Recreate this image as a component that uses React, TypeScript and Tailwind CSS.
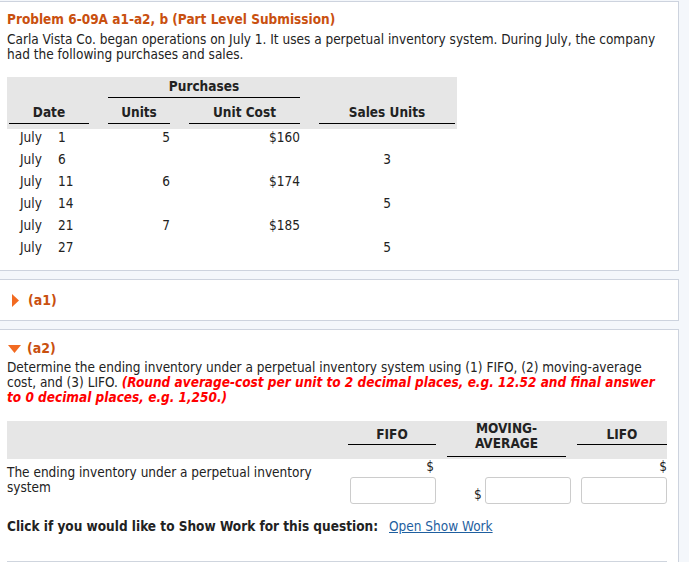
const rows = [
  { day: "1", units: "5", cost: "$160", sales: "" },
  { day: "6", units: "", cost: "", sales: "3" },
  { day: "11", units: "6", cost: "$174", sales: "" },
  { day: "14", units: "", cost: "", sales: "5" },
  { day: "21", units: "7", cost: "$185", sales: "" },
  { day: "27", units: "", cost: "", sales: "5" },
]

function Panel({ children, className = "" }: { children: React.ReactNode; className?: string }) {
  return (
    <div className={`bg-white border border-l-0 border-[#cdd3de] ${className}`}>{children}</div>
  )
}

function AnswerInput({ className = "" }: { className?: string }) {
  return (
    <input
      type="text"
      className={`h-[27px] w-[86px] rounded-[3px] border border-[#cccccc] bg-white px-1 outline-none ${className}`}
    />
  )
}

export default function App() {
  return (
    <div className="min-h-screen bg-[#f4f7fb] pr-[10px] pt-px text-[13.5px] leading-[15px] text-[#222] [font-family:'DejaVu_Sans_Condensed','Liberation_Sans',sans-serif]">
      <Panel className="px-[7px] pt-[10px] pb-[12px]">
        <h1 className="mb-[5px] font-bold text-[#c9500f]">
          Problem 6-09A a1-a2, b (Part Level Submission)
        </h1>
        <p>
          Carla Vista Co. began operations on July 1. It uses a perpetual inventory system. During July, the company
          had the following purchases and sales.
        </p>

        <div className="mt-[15px] w-[450px]">
          <div className="bg-[#e6e6e6] pt-[1px] pb-[5px] font-bold">
            <div className="flex gap-[15px]">
              <div className="w-[84px]" />
              <div className="w-[196px] px-[2px]">
                <div className="border-b border-black pb-[3px] pt-[1px] text-center">Purchases</div>
              </div>
            </div>
            <div className="mt-[7px] flex gap-[15px]">
              <div className="w-[84px] px-[2px]">
                <div className="border-b border-black pb-[3px] text-center">Date</div>
              </div>
              <div className="w-[66px] px-[2px]">
                <div className="border-b border-black pb-[3px] text-center">Units</div>
              </div>
              <div className="w-[115px] px-[2px]">
                <div className="border-b border-black pb-[3px] text-center">Unit Cost</div>
              </div>
              <div className="w-[140px] px-[2px]">
                <div className="border-b border-black pb-[3px] text-center">Sales Units</div>
              </div>
            </div>
          </div>
          <div className="-mt-[3px]">
            {rows.map((r) => (
              <div key={r.day} className="flex h-[22px] items-center gap-[15px]">
                <div className="flex w-[84px] pl-[13px]">
                  <span className="w-[38px]">July</span>
                  <span>{r.day}</span>
                </div>
                <div className="w-[66px] px-[2px] text-right">{r.units}</div>
                <div className="w-[115px] px-[2px] text-right">{r.cost}</div>
                <div className="w-[140px] px-[2px] text-center">{r.sales}</div>
              </div>
            ))}
          </div>
        </div>
      </Panel>

      <Panel className="mt-[8px] flex h-[42px] items-center gap-[9px] pl-[12px]">
        <svg width="7" height="13" viewBox="0 0 7 13" className="mt-px">
          <path d="M0 0 L7 6.5 L0 13 Z" fill="#f26a21" />
        </svg>
        <span className="text-[14px] font-bold text-[#c9500f]">(a1)</span>
      </Panel>

      <Panel className="mt-[8px] px-[7px] pt-[11px] pb-[2px]">
        <div className="flex items-center gap-[6px]">
          <svg width="13" height="8" viewBox="0 0 13 8" className="ml-px">
            <path d="M0 0 L13 0 L6.5 8 Z" fill="#f26a21" />
          </svg>
          <span className="text-[14px] font-bold text-[#c9500f]">(a2)</span>
        </div>
        <p className="mt-[4px]">
          Determine the ending inventory under a perpetual inventory system using (1) FIFO, (2) moving-average cost,
          and (3) LIFO.{" "}
          <span className="font-bold italic text-[#f00]">
            (Round average-cost per unit to 2 decimal places, e.g. 12.52 and final answer to 0 decimal places, e.g.
            1,250.)
          </span>
        </p>

        <div className="mt-[16px] w-[660px]">
          <div className="flex h-[38px] items-start bg-[#e6e6e6] font-bold">
            <div className="w-[341px]" />
            <div className="mt-[6px] w-[88px] border-b border-black pb-[2px] text-center">FIFO</div>
            <div className="ml-[11px] w-[119px] border-b border-black pb-[5px] text-center leading-[15px]">
              MOVING-
              <br />
              AVERAGE
            </div>
            <div className="ml-[11px] mt-[6px] w-[90px] border-b border-black pb-[2px] text-center">LIFO</div>
          </div>

          <div className="flex">
            <div className="w-[341px] pt-[6px] pr-[30px]">
              The ending inventory under a perpetual inventory system
            </div>
            <div className="flex w-[88px] flex-col items-end">
              <span className="pr-[2px]">$</span>
              <AnswerInput className="mt-[3px] ml-[3px] w-[86px]" />
            </div>
            <div className="ml-[11px] flex w-[119px] items-end pt-[9px]">
              <span className="mr-[3px] ml-[27px] pb-[2px]">$</span>
              <AnswerInput className="w-[85px]" />
            </div>
            <div className="ml-[11px] flex w-[90px] flex-col items-end">
              <span>$</span>
              <AnswerInput className="mt-[3px] w-[86px]" />
            </div>
          </div>
        </div>

        <div className="mt-[15px] flex items-center">
          <span className="font-bold">Click if you would like to Show Work for this question:</span>
          <a href="#" className="ml-[11px] text-[#1f5f9f] underline">
            Open Show Work
          </a>
        </div>

        <div className="mt-[27px] h-[20px] w-[660px] border border-[#cfd5de]" />
      </Panel>
    </div>
  )
}
